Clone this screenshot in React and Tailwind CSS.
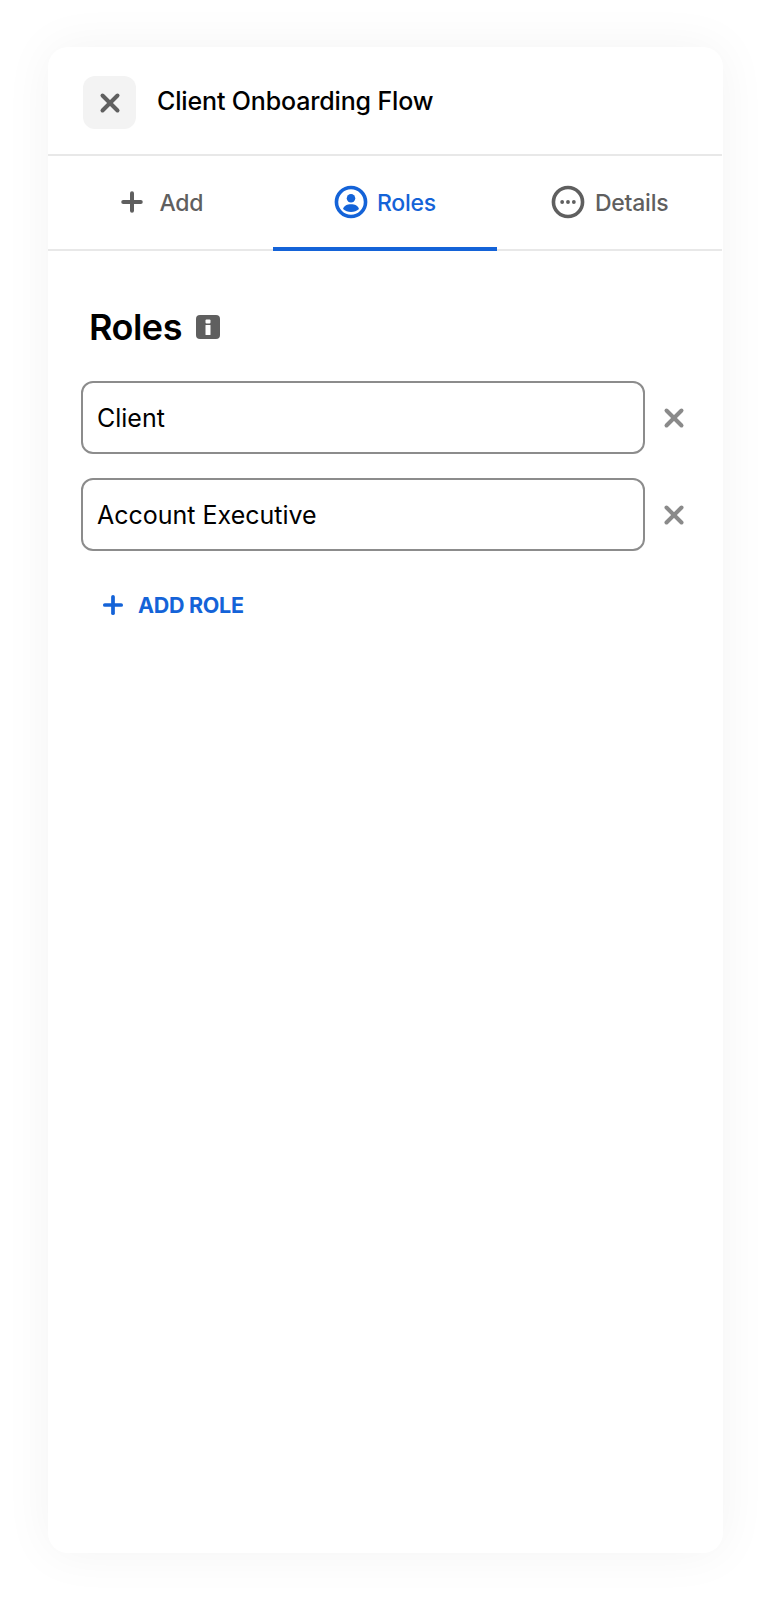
import React from 'react';
import { X, Plus } from 'lucide-react';

const RolesIcon = ({ className }) => (
    <svg viewBox="0 0 32 32" className={className} fill="none">
        <circle cx="16" cy="16" r="13.700" stroke="currentColor" strokeWidth="3.400" />
        <circle cx="16" cy="12.500" r="4" fill="currentColor" />
        <path d="M8.500 22.500c1-3.200 4-4.500 7.500-4.500s6.500 1.300 7.500 4.500c-2 1.800-4.600 2.800-7.500 2.800s-5.500-1-7.500-2.800z" fill="currentColor" />
    </svg>
);

const DetailsIcon = ({ className }) => (
    <svg viewBox="0 0 32 32" className={className} fill="none">
        <circle cx="16" cy="16" r="13.700" stroke="currentColor" strokeWidth="3.400" />
        <circle cx="10.500" cy="16" r="1.800" fill="currentColor" />
        <circle cx="16" cy="16" r="1.800" fill="currentColor" />
        <circle cx="21.500" cy="16" r="1.800" fill="currentColor" />
    </svg>
);

const InfoIcon = () => (
    <svg viewBox="0 0 24 24" className="w-6 h-6">
        <rect width="24" height="24" rx="4" fill="#5f5f5f" />
        <rect x="9.500" y="4.500" width="5" height="4" rx="1" fill="#fff" />
        <rect x="9.500" y="10" width="5" height="10" rx="0.500" fill="#fff" />
    </svg>
);

const Tab = ({ icon, label, active, gap }) => (
    <div className={`flex-1 flex items-center justify-center -mb-[2px] border-b-4 ${gap} ${active ? 'border-[#1463d8] text-[#1463d8]' : 'border-transparent text-[#5f5f5f]'}`}>
        {icon}
        <span className="text-[23px] font-medium tracking-[-0.25px] pt-[3px]">{label}</span>
    </div>
);

const RoleRow = ({ name }) => (
    <div className="flex items-center">
        <div className="w-[564px] h-[73px] flex items-center px-[14px] pt-[2px] border-2 border-[#8c8c8c] rounded-xl text-[25px] text-black">
            {name}
        </div>
        <X className="w-[30px] h-[30px] ml-[14px] text-[#8a8a8a]" strokeWidth={3.2} />
    </div>
);

export default function App() {
    return (
        <div className="min-h-screen bg-white pl-[48px] pt-[47px]" style={{ fontFamily: 'Inter, sans-serif' }}>
            <div className="w-[675px] h-[1506px] bg-white rounded-[20px] shadow-[0_0_50px_rgba(0,0,0,0.05)] flex flex-col">
                {/* Header */}
                <div className="h-[109px] flex items-center pt-[4px] pl-[35px] border-b-2 border-[#e8e8e8] mr-[1px]">
                    <div className="w-[53px] h-[53px] rounded-xl bg-[#f3f3f3] flex items-center justify-center">
                        <X className="w-[30px] h-[30px] text-[#5f5f5f]" strokeWidth={3.2} />
                    </div>
                    <h1 className="ml-[21px] text-[25px] font-medium tracking-[-0.15px] text-black -mt-[2px]">Client Onboarding Flow</h1>
                </div>
                {/* Tabs */}
                <div className="h-[95px] flex border-b-2 border-[#e8e8e8] mr-[1px]">
                    <Tab gap="gap-[12px]" icon={<Plus className="w-[30px] h-[30px]" strokeWidth={3.2} />} label="Add" />
                    <Tab gap="gap-[9px]" active icon={<RolesIcon className="w-[34px] h-[34px]" />} label="Roles" />
                    <Tab gap="gap-[10px]" icon={<DetailsIcon className="w-[34px] h-[34px]" />} label="Details" />
                </div>
                {/* Roles */}
                <div className="pl-[33px] pt-[52px]">
                    <div className="flex items-center gap-[14px] pl-[8px]">
                        <h2 className="text-[36px] font-semibold tracking-[-0.5px] text-black leading-[48px]">Roles</h2>
                        <InfoIcon />
                    </div>
                    <div className="mt-[30px] flex flex-col gap-[24px]">
                        <RoleRow name="Client" />
                        <RoleRow name="Account Executive" />
                    </div>
                    <div className="mt-[38px] pl-[18px] flex items-center gap-[11px] text-[#1463d8]">
                        <Plus className="w-[28px] h-[28px]" strokeWidth={3.2} />
                        <span className="text-[21.500px] font-bold tracking-[-0.3px]">ADD ROLE</span>
                    </div>
                </div>
            </div>
        </div>
    );
}
